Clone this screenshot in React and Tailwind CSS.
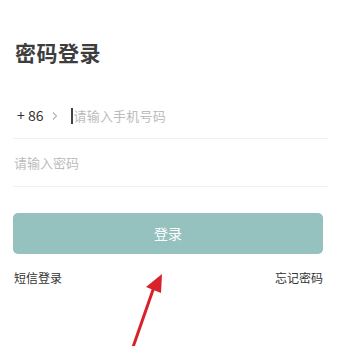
import React from "react";

export default function App() {
  const font = { fontFamily: '"Noto Sans CJK SC", "Noto Sans", sans-serif' };
  return (
    <div className="relative w-[341px] h-[346px] bg-white overflow-hidden" style={font}>
      <div className="px-[13px]">
        <h1 className="pt-[37px] pl-[2px] text-[21px] leading-[30px] font-bold text-[#3d3d3d] tracking-[0.5px]">
          密码登录
        </h1>
        <div className="mt-[26px] h-[46px] flex items-center border-b border-[#f0f0f0]">
          <span className="pl-[4px] text-[14px] text-[#333] w-[36px]">+ 86</span>
          <svg width="8" height="10" viewBox="0 0 8 10" className="ml-[2px]">
            <path d="M2 1.5 L5.5 5 L2 8.5" fill="none" stroke="#b5b5b5" strokeWidth="1.1" />
          </svg>
          <span className="ml-[12px] w-[1.5px] h-[16px] bg-[#444]" />
          <span className="ml-[1px] text-[13px] text-[#bcbcbc] tracking-[0.2px]">请输入手机号码</span>
        </div>
        <div className="h-[48px] flex items-center border-b border-[#f0f0f0]">
          <span className="pl-[1px] text-[13px] text-[#bcbcbc]">请输入密码</span>
        </div>
        <button className="mt-[26px] w-[310px] h-[41px] rounded-[5px] bg-[#95c2bf] text-white text-[14px] flex items-center justify-center">
          登录
        </button>
        <div className="mt-[15px] w-[310px] flex justify-between text-[12px] text-[#333]">
          <span className="pl-[1px]">短信登录</span>
          <span>忘记密码</span>
        </div>
      </div>
      <svg className="absolute left-0 top-0 pointer-events-none" width="341" height="346" viewBox="0 0 341 346">
        <line x1="132" y1="350" x2="154" y2="287" stroke="#d8222b" strokeWidth="3" />
        <polygon points="162,274 146,287 161,293" fill="#d8222b" />
      </svg>
    </div>
  );
}
